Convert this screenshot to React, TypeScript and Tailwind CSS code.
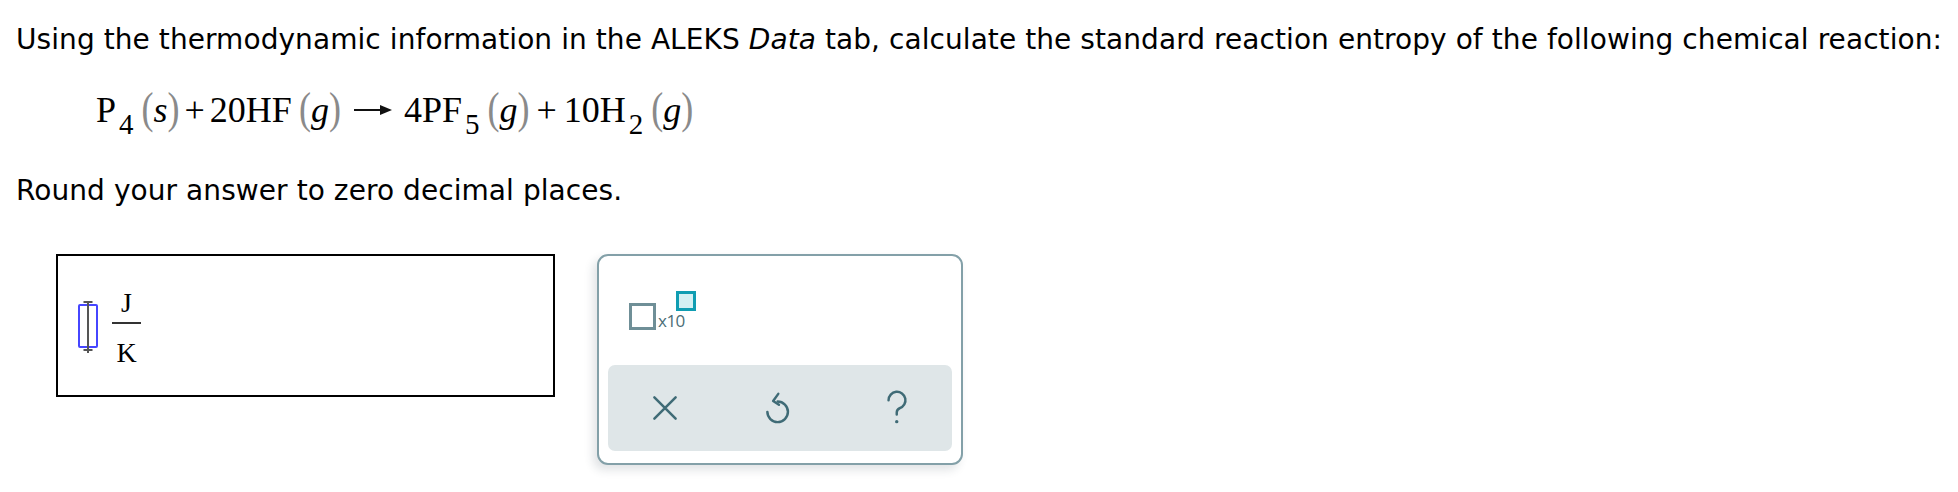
import React from "react";

const Paren = ({ children }: { children: React.ReactNode }) => (
  <span className="inline-flex items-baseline">
    <span className="inline-block origin-[50%_65%] scale-y-[1.25] text-[#8a8a8a]">(</span>
    <span className="italic">{children}</span>
    <span className="inline-block origin-[50%_65%] scale-y-[1.25] text-[#8a8a8a]">)</span>
  </span>
);

const Sub = ({ children }: { children: React.ReactNode }) => (
  <span className="relative top-[12px] ml-[3px] mr-[8px] text-[29px]">{children}</span>
);

function Arrow() {
  return (
    <svg width="40" height="12" viewBox="0 0 40 12" className="ml-[12px] mr-[11px] self-center">
      <line x1="1" y1="6" x2="29" y2="6" stroke="#111" strokeWidth="2" />
      <path d="M27 1 L39 6 L27 11 Z" fill="#111" />
    </svg>
  );
}

function Equation() {
  return (
    <div className="ml-[80px] mt-[28px] flex h-[52px] items-baseline font-['Liberation_Serif',serif] text-[36px] leading-[52px] text-black">
      <span>P</span>
      <Sub>4</Sub>
      <Paren>s</Paren>
      <span className="mx-[5px]">+</span>
      <span>20HF</span>
      <span className="ml-[7px]" />
      <Paren>g</Paren>
      <Arrow />
      <span>4PF</span>
      <Sub>5</Sub>
      <Paren>g</Paren>
      <span className="mx-[7px]">+</span>
      <span>10H</span>
      <Sub>2</Sub>
      <Paren>g</Paren>
    </div>
  );
}

function AnswerBox() {
  return (
    <div className="flex h-[143px] w-[499px] items-center border-2 border-black pl-[20px]">
      <div className="relative h-[44px] w-[20px] rounded-[2px] border-2 border-[#4646ff]">
        <div className="absolute -top-[5px] left-1/2 h-[52px] w-[2px] -translate-x-1/2 bg-[#555]" />
        <div className="absolute -top-[5px] left-1/2 h-[2px] w-[9px] -translate-x-1/2 bg-[#555]" />
        <div className="absolute -bottom-[5px] left-1/2 h-[2px] w-[9px] -translate-x-1/2 bg-[#555]" />
      </div>
      <div className="ml-[14px] mt-[5px] flex flex-col items-center font-['Liberation_Serif',serif] text-[28px] leading-[32px] text-black">
        <span>J</span>
        <div className="mb-[13px] mt-[3px] h-[2px] w-[29px] bg-[#333]" />
        <span>K</span>
      </div>
    </div>
  );
}

function Keypad() {
  return (
    <div className="flex h-[211px] w-[366px] flex-col rounded-[11px] border-2 border-[#83a0a8] bg-white shadow-[-4px_5px_10px_rgba(40,60,70,0.14)]">
      <div className="flex h-[109px] items-start pl-[30px] pt-[47px]">
        <div className="relative flex items-end">
          <div className="h-[27px] w-[27px] border-[3px] border-[#6f8f97]" />
          <span className="ml-[2px] font-['Open_Sans',sans-serif] text-[17px] leading-[18px] tracking-[-0.5px] text-[#4a6d76]">x10</span>
          <div className="absolute left-[47px] -top-[12px] h-[20px] w-[20px] border-[3px] border-[#0f9db2] bg-[#d3f0f3]" />
        </div>
      </div>
      <div className="mx-[9px] grid h-[86px] grid-cols-3 items-center rounded-[7px] bg-[#dfe6e8]">
        <div className="flex justify-center">
          <svg width="30" height="30" viewBox="0 0 24 24" fill="none" stroke="#3f6b76" strokeWidth="2" strokeLinecap="round">
            <path d="M3.5 3.5 L20.5 20.5 M20.5 3.5 L3.5 20.5" />
          </svg>
        </div>
        <div className="flex justify-center pr-[6px]">
          <svg width="32" height="36" viewBox="0 0 24 28" fill="none" stroke="#3f6b76" strokeWidth="1.9" strokeLinecap="round" strokeLinejoin="round">
            <path d="M12.5 9 A8 8 0 1 1 4.5 17" />
            <path d="M13 3 L9 8.5 L13.5 11.5" />
          </svg>
        </div>
        <div className="flex justify-center pl-[4px]">
          <svg width="26" height="38" viewBox="0 0 20 28" fill="none" stroke="#3f6b76" strokeWidth="1.9" strokeLinecap="round">
            <path d="M3.5 8 A6.5 6.5 0 1 1 12 14.2 C10.6 14.8 9.8 16 9.8 17.5 V19" />
            <circle cx="9.8" cy="24.5" r="1.3" fill="#3f6b76" stroke="none" />
          </svg>
        </div>
      </div>
    </div>
  );
}

export default function App() {
  return (
    <div className="h-[492px] w-[1958px] bg-white pl-[16px] pt-[24px] font-['DejaVu_Sans',Verdana,sans-serif] text-black">
      <p className="whitespace-nowrap text-[28px] leading-[32px] tracking-[0.07px]">
        Using the thermodynamic information in the ALEKS <i>Data</i> tab, calculate the standard reaction entropy of the
        following chemical reaction:
      </p>
      <Equation />
      <p className="mt-[39px] text-[28px] leading-[32px] tracking-[0.07px]">Round your answer to zero decimal places.</p>
      <div className="ml-[40px] mt-[47px] flex items-start gap-[42px]">
        <AnswerBox />
        <Keypad />
      </div>
    </div>
  );
}
